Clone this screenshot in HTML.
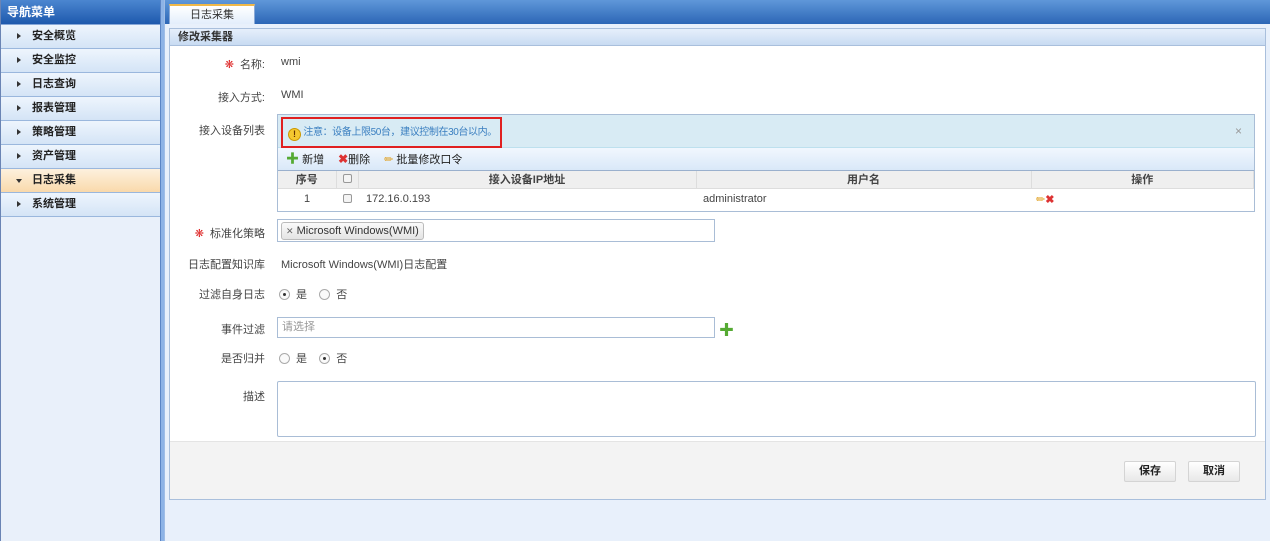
<!DOCTYPE html>
<html><head><meta charset="utf-8"><style>
*{margin:0;padding:0;box-sizing:border-box}
body{width:1270px;height:541px;overflow:hidden;background:#e8f0fb;font-family:"Liberation Sans","Noto Sans CJK SC",sans-serif;font-size:11px;color:#333;position:relative}
.a{position:absolute}
#side{left:0;top:0;width:160px;height:541px;background:#e9f0fa;border-left:1px solid #6a84b4}
#side .h{height:25px;background:linear-gradient(#4b86d0,#1e59ad);color:#fff;font-weight:bold;font-size:12px;line-height:25px;padding-left:6px;border-bottom:1px solid #87a8d8}
.it{height:24px;background:linear-gradient(#eef5fd,#d4e4f6);border-bottom:1px solid #9ab7dd;line-height:23px;padding-left:31px;font-weight:bold;color:#222;position:relative}
.it:before{content:"";position:absolute;left:16px;top:8px;border-left:4px solid #333;border-top:3px solid transparent;border-bottom:3px solid transparent}
.it.on{background:linear-gradient(#fdf1de,#f9d9ab)}
.it.on:before{left:15px;top:10px;border-top:4px solid #333;border-left:3px solid transparent;border-right:3px solid transparent;border-bottom:0}
#div{left:160px;top:0;width:5px;height:541px;background:#8db3e6;border-left:1px solid #5b85c5;border-right:1px solid #9fbde6}
#top{left:165px;top:0;width:1105px;height:24px;background:linear-gradient(#5f97d9,#2c66b6)}
#tab{left:169px;top:4px;width:86px;height:20px;background:linear-gradient(#fff,#e3eefb);border:1px solid #8aa9d6;border-bottom:0;border-top:2px solid #f0b848;text-align:center;line-height:18px;color:#333}
#pan{left:169px;top:28px;width:1097px;height:472px;background:#fff;border:1px solid #a9bfdc}
#ph{height:17px;background:linear-gradient(#e6effb,#c8dbf2);border-bottom:1px solid #a9bfdc;line-height:16px;padding-left:8px;font-weight:bold;color:#333}
#foot{left:0;top:412px;width:1095px;height:58px;background:#f3f3f3;border-top:1px solid #e4e4e4}
.btn{position:absolute;top:19px;width:52px;height:21px;background:linear-gradient(#fff,#e8e8e8);border:1px solid #d4d4d4;border-radius:2px;text-align:center;line-height:19px;font-weight:bold;color:#222}
.lb{position:absolute;text-align:right;width:100px;color:#444}
.v{position:absolute;color:#444}
.star{color:#d22;margin-right:6px}
.inp{position:absolute;background:#fff;border:1px solid #a9bdd6}
.rad{display:inline-block;width:11px;height:11px;border:1px solid #aaa;border-radius:50%;vertical-align:-2px;margin-right:6px;background:#fafafa;position:relative}
.rad.c:after{content:"";position:absolute;left:3px;top:3px;width:3px;height:3px;border-radius:50%;background:#333}
table{border-collapse:collapse;width:100%}
th{height:17px;background:#efefef;border-right:1px solid #ddd;border-bottom:1px solid #ddd;font-weight:bold;color:#444;font-size:11px}
td{height:22px;color:#444}
.cb{display:inline-block;width:9px;height:9px;border:1px solid #999;border-radius:2px;background:#f4f4f4;vertical-align:-1px}
.tb span{display:inline-block;margin-right:14px}
</style></head><body>
<div id="side" class="a"><div class="h">导航菜单</div>
<div class="it">安全概览</div><div class="it">安全监控</div><div class="it">日志查询</div><div class="it">报表管理</div><div class="it">策略管理</div><div class="it">资产管理</div><div class="it on">日志采集</div><div class="it">系统管理</div></div>
<div id="div" class="a"></div>
<div id="top" class="a"></div>
<div id="tab" class="a">日志采集</div>
<div id="pan" class="a"><div id="ph">修改采集器</div>
<div id="foot" class="a"><div class="btn" style="left:954px">保存</div><div class="btn" style="left:1018px">取消</div></div>
</div>
<div class="lb" style="left:165px;top:56px"><span class="star">❋</span>名称:</div><div class="v" style="left:281px;top:56px">wmi</div>
<div class="lb" style="left:165px;top:89px">接入方式:</div><div class="v" style="left:281px;top:89px">WMI</div>
<div class="lb" style="left:165px;top:122px">接入设备列表</div>
<div class="a" style="left:277px;top:114px;width:978px;height:98px;border:1px solid #a9bdd6;background:#fff">
<div style="height:33px;background:#d8ebf4;border-bottom:1px solid #bde0ee;position:relative"><span style="position:absolute;right:12px;top:9px;color:#999;font-size:12px">×</span></div>
<div class="tb" style="height:23px;background:linear-gradient(#f1f7fe,#d9e8f8);border-bottom:1px solid #9ab0cd;line-height:22px;padding-left:8px;color:#222;white-space:nowrap">
<span><b style="color:#5a3;font-size:13px">✚</b> 新增</span><span><b style="color:#d33;font-size:12px">✖</b>删除</span><span><b style="color:#e0a020;font-weight:normal">✏</b> 批量修改口令</span></div>
<table><tr><th style="width:58px">序号</th><th style="width:22px"><span class="cb"></span></th><th style="width:338px">接入设备IP地址</th><th style="width:335px">用户名</th><th>操作</th></tr>
<tr><td style="text-align:center">1</td><td style="text-align:center"><span class="cb"></span></td><td style="padding-left:8px">172.16.0.193</td><td style="padding-left:7px">administrator</td><td style="padding-left:5px"><span style="color:#e0a020">✏</span><span style="color:#d33;font-weight:bold">✖</span></td></tr></table>
</div>
<div class="a" style="left:281px;top:117px;width:221px;height:31px;border:2px solid #e02020;line-height:27px;padding-left:5px;color:#3a7fc0;white-space:nowrap;font-size:10px;letter-spacing:-0.4px;overflow:hidden"><span style="display:inline-block;width:13px;height:13px;border-radius:50%;background:#f5c830;border:1px solid #c90;color:#630;font-size:9px;text-align:center;line-height:11px;font-weight:bold;vertical-align:-2px;letter-spacing:0">!</span> 注意：设备上限50台，建议控制在30台以内。</div>
<div class="lb" style="left:165px;top:225px"><span class="star">❋</span>标准化策略</div>
<div class="inp" style="left:277px;top:219px;width:438px;height:23px"><span style="position:absolute;left:3px;top:2px;border:1px solid #bbb;border-radius:3px;background:linear-gradient(#fafafa,#e4e4e4);padding:1px 4px;color:#333;line-height:14px"><span style="color:#666;font-size:9px">✕</span> Microsoft Windows(WMI)</span></div>
<div class="lb" style="left:165px;top:256px">日志配置知识库</div><div class="v" style="left:281px;top:256px">Microsoft Windows(WMI)日志配置</div>
<div class="lb" style="left:165px;top:286px">过滤自身日志</div><div class="v" style="left:279px;top:286px"><span class="rad c"></span>是 &nbsp;&nbsp;&nbsp;<span class="rad"></span>否</div>
<div class="lb" style="left:165px;top:321px">事件过滤</div>
<div class="inp" style="left:277px;top:317px;width:438px;height:21px;color:#999;line-height:19px;padding-left:4px">请选择</div>
<div class="a" style="left:719px;top:319px;color:#5a3;font-size:15px;font-weight:bold">✚</div>
<div class="lb" style="left:165px;top:350px">是否归并</div><div class="v" style="left:279px;top:350px"><span class="rad"></span>是 &nbsp;&nbsp;&nbsp;<span class="rad c"></span>否</div>
<div class="lb" style="left:165px;top:388px">描述</div>
<div class="inp" style="left:277px;top:381px;width:979px;height:56px;border-radius:2px"></div>
</body></html>
